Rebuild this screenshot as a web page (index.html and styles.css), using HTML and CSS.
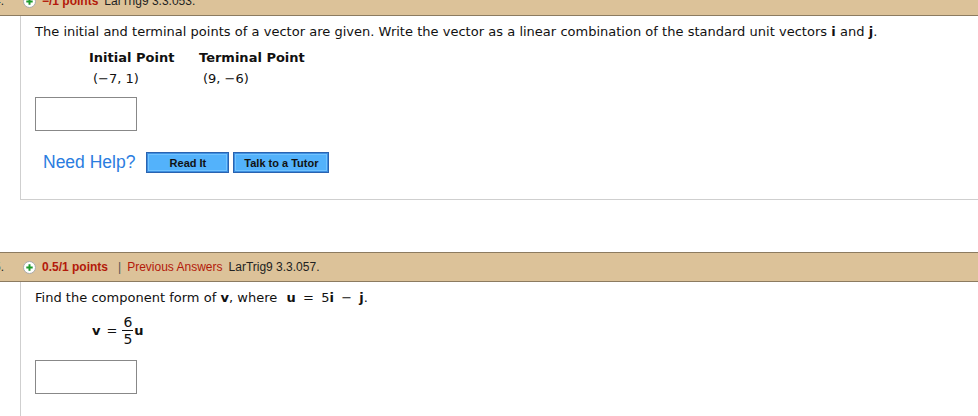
FILE: index.html
```html
<!DOCTYPE html>
<html>
<head>
<meta charset="utf-8">
<link rel="stylesheet" href="styles.css">
</head>
<body>
<div class="q q-first">
  <div class="qbar">
    <span class="num">4.</span>
    <span class="plus"><svg width="13" height="13" viewBox="0 0 13 13"><circle cx="6.5" cy="6.5" r="6" fill="#fff" stroke="#aaa" stroke-width="1"/><path d="M6.5 3.3v6.4M3.3 6.5h6.4" stroke="#1e9a2c" stroke-width="2"/></svg></span>
    <span class="pts">&minus;/1 points</span>
    <span class="ref">LarTrig9 3.3.053.</span>
  </div>
  <div class="qbody">
    <p class="txt">The initial and terminal points of a vector are given. Write the vector as a linear combination of the standard unit vectors <b>i</b> and <b>j</b>.</p>
    <div class="pts-table">
      <span class="th">Initial Point</span><span class="th">Terminal Point</span>
      <span class="td">(&minus;7, 1)</span><span class="td">(9, &minus;6)</span>
    </div>
    <div class="answer"></div>
    <div class="help">
      <span class="help-label">Need Help?</span>
      <span class="btn btn-read">Read It</span>
      <span class="btn btn-tutor">Talk to a Tutor</span>
    </div>
  </div>
</div>

<div class="q q-second">
  <div class="qbar">
    <span class="num">5.</span>
    <span class="plus"><svg width="13" height="13" viewBox="0 0 13 13"><circle cx="6.5" cy="6.5" r="6" fill="#fff" stroke="#aaa" stroke-width="1"/><path d="M6.5 3.3v6.4M3.3 6.5h6.4" stroke="#1e9a2c" stroke-width="2"/></svg></span>
    <span class="pts">0.5/1 points</span>
    <span class="sep">|</span>
    <span class="prev">Previous Answers</span>
    <span class="ref">LarTrig9 3.3.057.</span>
  </div>
  <div class="qbody qbody-open">
    <p class="txt">Find the component form of <b>v</b>, where <span class="gap"></span><b>u</b> <span class="op">=</span> 5<b>i</b> <span class="op">&minus;</span> <b>j</b>.</p>
    <div class="eq">
      <b class="var">v</b><span class="eqs">=</span><span class="frac"><span class="numr">6</span><span class="den">5</span></span><b class="var">u</b>
    </div>
    <div class="answer answer2"></div>
  </div>
</div>
</body>
</html>
```

FILE: styles.css
```css
html, body {
  margin: 0;
  padding: 0;
  background: #fff;
  overflow: hidden;
}
body {
  font-family: "DejaVu Sans", Verdana, sans-serif;
  color: #111;
  width: 978px;
}
.q-first {
  margin-top: -14px;
}
.q-second {
  margin-top: 52px;
}
.qbar {
  height: 28px;
  background: #dcc299;
  border-top: 1px solid #8c7b60;
  border-bottom: 1px solid #8c7b60;
  display: flex;
  align-items: center;
  font-family: "Liberation Sans", Arial, sans-serif;
  font-size: 12px;
  color: #222;
  white-space: nowrap;
}
.num {
  margin-left: -6px;
  width: 29px;
  font-size: 12px;
}
.plus {
  display: flex;
  width: 19px;
}
.pts {
  color: #b3190a;
  font-weight: bold;
  font-size: 12px;
}
.sep {
  color: #555;
  margin-left: 10px;
  margin-right: 6px;
}
.prev {
  color: #b3190a;
  margin-right: 6px;
}
.q-first .pts {
  margin-right: 6px;
}
.qbody {
  margin-left: 20px;
  border-left: 1px solid #cfcfcf;
  border-bottom: 1px solid #cfcfcf;
  padding: 8px 0 26px 14px;
}
.qbody-open {
  border-bottom: none;
  padding-bottom: 40px;
}
.txt {
  margin: 0;
  font-size: 13px;
  line-height: 16px;
  word-spacing: 0.1px;
}
.txt b {
  font-weight: bold;
}
.gap {
  display: inline-block;
  width: 5px;
}
.op {
  margin: 0 3px;
}
.pts-table {
  margin-top: 7px;
  margin-left: 54px;
  display: grid;
  grid-template-columns: 110px auto;
  font-size: 13px;
  line-height: 21px;
}
.th {
  font-weight: bold;
}
.td {
  padding-left: 4px;
}
.answer {
  margin-top: 8px;
  width: 100px;
  height: 32px;
  border: 1px solid #888;
}
.help {
  margin-top: 21px;
  display: flex;
  align-items: center;
  height: 21px;
}
.help-label {
  margin-left: 8px;
  margin-right: 11px;
  font-family: "Liberation Sans", Arial, sans-serif;
  font-size: 17.5px;
  color: #2b7de0;
}
.btn {
  box-sizing: border-box;
  height: 21px;
  display: flex;
  align-items: center;
  justify-content: center;
  background: #53b2fb;
  border: 1px solid #2a63b0;
  box-shadow: inset 0 0 0 1px #3d8fe0, inset 0 0 0 2px #72c3ff;
  font-family: "Liberation Sans", Arial, sans-serif;
  font-weight: bold;
  font-size: 11px;
  color: #111;
}
.btn-read {
  width: 83px;
  margin-right: 4px;
}
.btn-tutor {
  width: 96px;
}
.eq {
  margin-top: 9px;
  margin-left: 57px;
  display: flex;
  align-items: center;
  font-size: 13px;
  height: 30px;
}
.var {
  font-weight: bold;
}
.eqs {
  margin: 0 5px 0 6px;
}
.frac {
  display: inline-flex;
  flex-direction: column;
  align-items: center;
  line-height: 14px;
  margin-right: 1px;
  font-size: 14px;
}
.numr {
  padding: 0 1px 1px;
  border-bottom: 1px solid #111;
}
.den {
  padding-top: 1px;
}
.answer2 {
  margin-top: 15px;
}
```
